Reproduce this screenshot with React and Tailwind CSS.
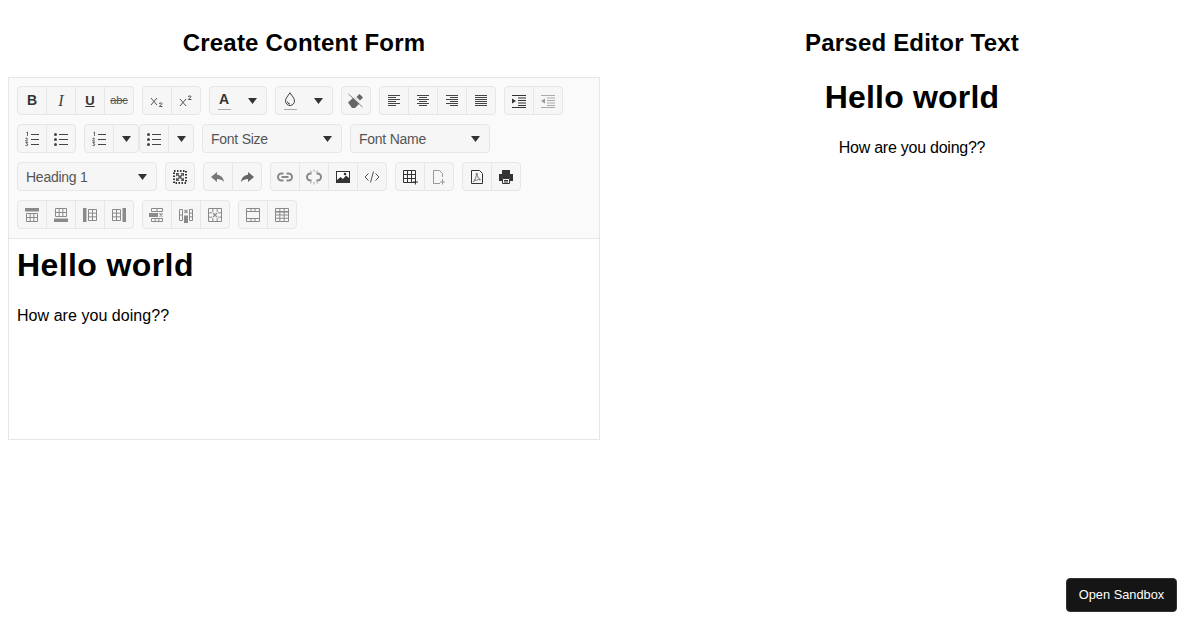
import React from "react";

const I = ({ children, w = 16, h = 16, c = "#444", className = "" }) => (
  <svg width={w} height={h} viewBox={`0 0 ${w} ${h}`} fill="none" stroke={c} strokeWidth="1" className={className}>
    {children}
  </svg>
);

const Caret = () => (
  <svg width="9" height="6" viewBox="0 0 9 6"><path d="M0 0h9L4.500 6z" fill="#333" /></svg>
);

const Lines = ({ rows, c = "#444" }) => (
  <I c={c}>{rows.map(([x1, x2], i) => <path key={i} d={`M${x1} ${2.5 + i * 2}H${x2}`} />)}</I>
);

const Ol = () => (
  <I w={16} h={16} c="#444">
    <path d="M7 3.500h8M7 8.500h8M7 13.500h8" />
    <path d="M2.500 1.500 3.500 1v4M1.500 7.500q2-1.200 2 .3L1.500 10h2.500M1.500 11.500h2l-1 1.300q1.600 0 1.300 1.200-.4 1-2.300.5" strokeWidth=".8" />
  </I>
);
const Ul = () => (
  <I>
    <path d="M6 3.500h9M6 8.500h9M6 13.500h9" />
    <circle cx="2.500" cy="3.500" r="1.500" fill="#444" stroke="none" />
    <circle cx="2.500" cy="8.500" r="1.500" fill="#444" stroke="none" />
    <circle cx="2.500" cy="13.500" r="1.500" fill="#444" stroke="none" />
  </I>
);

const grid = (x, y, w, h, cols, rows) => {
  let d = `M${x} ${y}h${w}v${h}h${-w}z`;
  for (let i = 1; i < cols; i++) d += `M${x + (w * i) / cols} ${y}v${h}`;
  for (let i = 1; i < rows; i++) d += `M${x} ${y + (h * i) / rows}h${w}`;
  return d;
};

const G = "#8a8a8a";
const icons = {
  sub: <I c="#555"><path d="m2 5 6 7M8 5l-6 7" /><path d="M10 10.500q3-1.500 3 .3L10.300 13.500H13.500" /></I>,
  sup: <I c="#555"><path d="m2 6 6 7M8 6l-6 7" /><path d="M10 3.500q3-1.500 3 .3L10.300 6.500H13.500" /></I>,
  eraser: <I><path d="M0 9.500 6 4l6 6-5 5H4z" fill="#666" stroke="none" /><path d="M8.500 4 11.500 1 15 4.500 12 7.500z" fill="#666" stroke="none" /><path d="M1 .5 15 13.500" stroke="#f6f6f6" strokeWidth="1.400" /><path d="M.5 1 14.500 14" stroke="#666" strokeWidth=".8" /></I>,
  left: <Lines rows={[[2, 14], [2, 10], [2, 14], [2, 10], [2, 14], [2, 10]]} />,
  center: <Lines rows={[[2, 14], [4, 12], [2, 14], [4, 12], [2, 14], [4, 12]]} />,
  right: <Lines rows={[[2, 14], [6, 14], [2, 14], [6, 14], [2, 14], [6, 14]]} />,
  just: <Lines rows={[[2, 14], [2, 14], [2, 14], [2, 14], [2, 14], [2, 14]]} />,
  indent: <I c="#333"><path d="M1 2.500h14M7 5h8M7 7.500h8M7 10h8M7 12.500h8M1 14.500h14" /><path d="M1 5.500 5 8l-4 2.500z" fill="#333" stroke="none" /></I>,
  outdent: <I c="#aaa"><path d="M1 2.500h14M7 5h8M7 7.500h8M7 10h8M7 12.500h8M1 14.500h14" /><path d="M5 5.500 1 8l4 2.500z" fill="#999" stroke="none" /></I>,
  full: <I c="#333"><rect x="2" y="2" width="12" height="12" strokeDasharray="1.500 1.500" strokeWidth="2" /><path d="M5.500 5.500l5 5M10.500 5.500l-5 5" stroke="#555" strokeWidth="1.600" /><path d="M4 4h3.500L4 7.500zM12 4H8.500L12 7.500zM4 12h3.500L4 8.500zM12 12H8.500L12 8.500z" fill="#555" stroke="none" /></I>,
  undo: <I><path d="M7 3 1 8l6 5v-3c3 0 5 .7 7 3-.4-4-3-7-7-7.300z" fill="#777" stroke="none" /></I>,
  redo: <I><path d="m9 3 6 5-6 5v-3c-3 0-5 .7-7 3 .4-4 3-7 7-7.300z" fill="#666" stroke="none" /></I>,
  link: <I c="#888"><path d="M6.500 4.500h-2a3.500 3.500 0 0 0 0 7h2M9.500 4.500h2a3.500 3.500 0 0 1 0 7h-2M4.500 8h7" strokeWidth="2" /></I>,
  unlink: <I c="#888"><path d="M5.500 4.500h-1a3.500 3.500 0 0 0 0 7h1M10.500 4.500h1a3.500 3.500 0 0 1 0 7h-1" strokeWidth="2" /><path d="M8 .5v2.500M8 13v2.500M4.500 1.500l1 2M11.500 1.500l-1 2M4.500 14.500l1-2M11.500 14.500l-1-2" stroke="#aaa" /></I>,
  image: <I><path d="M1 2h14v12H1z" fill="#333" stroke="none" /><path d="M2 3h12v6L11 6.500 8 10 5.500 8 2 11z" fill="#fff" stroke="none" /><circle cx="10" cy="5" r="1.300" fill="#333" stroke="none" /></I>,
  code: <I c="#555"><path d="M4.500 4.500 1 8l3.500 3.500M11.500 4.500 15 8l-3.500 3.500M9.500 2.500l-3 11" /></I>,
  table: <I c="#333"><path d={grid(1.500, 1.500, 12, 12, 3, 3)} /><path d="M13.500 10.500v5M11 13h5" /></I>,
  page: <I c="#999"><path d="M11.500 8V4.500l-3-3H2.500v13H9" /><path d="M11.500 10v5.500M9 13h5" /></I>,
  pdf: <I c="#333"><path d="M2.500 1.500h8l3 3v10h-11z" /><path d="M7.500 4c0 4-1.500 7-3 8.500 2-1.500 4.500-2 7-1.800-1.800-.7-3.300-3-3.500-6.700" stroke="#666" strokeWidth=".9" /></I>,
  print: <I><path d="M4 1h8v4H4zM1 5h14v7h-3V9H4v3H1z" fill="#333" stroke="none" /><path d="M4.500 9.500h7v5h-7zM6 11.500h4M6 13h4" stroke="#333" /></I>,
  t1: <I c={G}><path d="M1 1h14v3.500H1z" fill={G} stroke="none" /><path d={grid(2.500, 6.500, 11, 8, 3, 2)} /></I>,
  t2: <I c={G}><path d="M1 11.500h14V15H1z" fill={G} stroke="none" /><path d={grid(2.500, 1.500, 11, 8, 3, 2)} /></I>,
  t3: <I c={G}><path d="M1 1h3.500v14H1z" fill={G} stroke="none" /><path d={grid(6.500, 2.500, 8, 11, 2, 3)} /></I>,
  t4: <I c={G}><path d="M11.500 1H15v14h-3.500z" fill={G} stroke="none" /><path d={grid(1.500, 2.500, 8, 11, 2, 3)} /></I>,
  d1: <I c={G}><path d={grid(2.500, 1.500, 11, 3, 2, 1)} /><path d={grid(2.500, 11.500, 11, 3, 3, 1)} /><path d="M0 6h9v4H0z" fill={G} stroke="none" /><path d="M10.500 6.500l3 3M13.500 6.500l-3 3" strokeWidth="1.200" /></I>,
  d2: <I c={G}><path d={grid(1.500, 2.500, 3, 11, 1, 2)} /><path d={grid(11.500, 2.500, 3, 11, 1, 3)} /><path d="M6 8.500h4V16H6z" fill={G} stroke="none" /><path d="M6.500 3l3 3M9.500 3l-3 3" strokeWidth="1.200" /></I>,
  d3: <I c={G}><path d={grid(1.500, 1.500, 13, 13, 3, 3)} /><rect x="5" y="5" width="6" height="6" fill="#f6f6f6" stroke="none" /><path d="M6 6l4 4M10 6l-4 4" strokeWidth="1.200" /></I>,
  m1: <I c={G}><path d="M1.500 1.500h13v13h-13zM1.500 4.500h13M1.500 11.500h13M6 1.500v3M10 1.500v3M6 11.500v3M10 11.500v3" /></I>,
  m2: <I c={G}><path d={grid(1.500, 1.500, 13, 13, 3, 4)} /><path d="M1.500 4.750h13" strokeWidth="1.400" /></I>,
};

const Btn = ({ children, className = "w-[30px]" }) => (
  <div className={`${className} h-[29px] -ml-px first:ml-0 flex items-center justify-center bg-[#f6f6f6] border border-[#e6e6e6] first:rounded-l-[4px] last:rounded-r-[4px] text-[#333]`}>
    {children}
  </div>
);

const Group = ({ children }) => <div className="flex">{children}</div>;

const Select = ({ label, w = "w-[140px]" }) => (
  <div className={`${w} h-[29px] flex items-center justify-between pl-[8px] pr-[9px] bg-[#f6f6f6] border border-[#e6e6e6] rounded-[4px] text-[14px] tracking-[-0.25px] text-[#555]`}>
    <span className="pt-[2px]">{label}</span>
    <Caret />
  </div>
);

const Color = ({ children }) => (
  <Group>
    <Btn className="w-[58px]">
      <div className="w-full flex items-center justify-between pl-[6px] pr-[9px]">
        {children}
        <Caret />
      </div>
    </Btn>
  </Group>
);

export default function App() {
  return (
    <div className="flex bg-white h-[630px] overflow-hidden text-black font-['Liberation_Sans',Arial,sans-serif]">
      <div className="w-[608px] shrink-0 px-2">
        <h2 className="text-[24px] leading-[28px] font-bold text-center mt-[29px] mb-[20px] tracking-[0.2px]">Create Content Form</h2>
        <div className="border border-[#e6e6e6]">
          <div className="bg-[#fafafa] border-b border-[#e6e6e6] pt-[8px] pl-[8px] pb-[9px] flex flex-col gap-[9px]">
            <div className="flex gap-[8px]">
              <Group>
                <Btn><span className="font-bold text-[14px]">B</span></Btn>
                <Btn><span className="italic font-['Liberation_Serif',serif] text-[16px] text-[#444]">I</span></Btn>
                <Btn><span className="underline font-bold text-[13px]">U</span></Btn>
                <Btn><span className="line-through text-[11px] text-[#555]">abc</span></Btn>
              </Group>
              <Group>
                <Btn>{icons.sub}</Btn>
                <Btn>{icons.sup}</Btn>
              </Group>
              <Color>
                <div className="w-[16px] flex flex-col items-center">
                  <span className="font-bold text-[14px] leading-[14px] text-[#333]">A</span>
                  <span className="w-[13px] h-px bg-[#aaa] mt-[3px]" />
                </div>
              </Color>
              <Color>
                <div className="w-[16px] flex flex-col items-center">
                  <svg width="12" height="15" viewBox="0 0 12 15" fill="none" stroke="#444"><path d="M6 .8C4 4 1.500 6 1.500 9a4.500 4.500 0 0 0 9 0C10.500 6 8 4 6 .8z" /><path d="M3.500 9.500a2.500 2.500 0 0 0 2.500 2.500" /></svg>
                  <span className="w-[13px] h-px bg-[#aaa] mt-[2px]" />
                </div>
              </Color>
              <Group><Btn>{icons.eraser}</Btn></Group>
              <Group>
                <Btn>{icons.left}</Btn>
                <Btn>{icons.center}</Btn>
                <Btn>{icons.right}</Btn>
                <Btn>{icons.just}</Btn>
              </Group>
              <Group>
                <Btn>{icons.indent}</Btn>
                <Btn>{icons.outdent}</Btn>
              </Group>
            </div>
            <div className="flex gap-[8px]">
              <Group>
                <Btn><Ol /></Btn>
                <Btn><Ul /></Btn>
              </Group>
              <div className="flex">
                <Group>
                  <Btn><Ol /></Btn>
                  <Btn className="w-[26px]"><Caret /></Btn>
                </Group>
                <Group>
                  <Btn><Ul /></Btn>
                  <Btn className="w-[26px]"><Caret /></Btn>
                </Group>
              </div>
              <Select label="Font Size" />
              <Select label="Font Name" />
            </div>
            <div className="flex gap-[8px]">
              <Select label="Heading 1" />
              <Group><Btn>{icons.full}</Btn></Group>
              <Group>
                <Btn>{icons.undo}</Btn>
                <Btn>{icons.redo}</Btn>
              </Group>
              <Group>
                <Btn>{icons.link}</Btn>
                <Btn>{icons.unlink}</Btn>
                <Btn>{icons.image}</Btn>
                <Btn>{icons.code}</Btn>
              </Group>
              <Group>
                <Btn>{icons.table}</Btn>
                <Btn>{icons.page}</Btn>
              </Group>
              <Group>
                <Btn>{icons.pdf}</Btn>
                <Btn>{icons.print}</Btn>
              </Group>
            </div>
            <div className="flex gap-[8px]">
              <Group>
                <Btn>{icons.t1}</Btn>
                <Btn>{icons.t2}</Btn>
                <Btn>{icons.t3}</Btn>
                <Btn>{icons.t4}</Btn>
              </Group>
              <Group>
                <Btn>{icons.d1}</Btn>
                <Btn>{icons.d2}</Btn>
                <Btn>{icons.d3}</Btn>
              </Group>
              <Group>
                <Btn>{icons.m1}</Btn>
                <Btn>{icons.m2}</Btn>
              </Group>
            </div>
          </div>
          <div className="h-[200px] px-2 pt-[8px]">
            <h1 className="text-[32px] leading-[37px] font-bold tracking-[0.4px]">Hello world</h1>
            <p className="text-[16px] leading-[18px] mt-[23px] tracking-[0.05px]">How are you doing??</p>
          </div>
        </div>
      </div>
      <div className="flex-1 pl-[16px] text-center">
        <h2 className="text-[24px] leading-[28px] font-bold mt-[29px] tracking-[0.2px]">Parsed Editor Text</h2>
        <h1 className="text-[32px] leading-[37px] font-bold mt-[22px] tracking-[0.2px]">Hello world</h1>
        <p className="text-[16px] leading-[18px] mt-[23px] tracking-[-0.25px]">How are you doing??</p>
      </div>
      <div className="fixed right-[23px] bottom-[18px] w-[111px] h-[34px] bg-[#151515] rounded-[4px] flex items-center justify-center text-[12.8px] text-white border border-[#333]">
        Open Sandbox
      </div>
    </div>
  );
}
